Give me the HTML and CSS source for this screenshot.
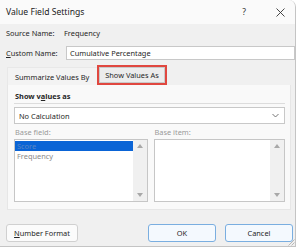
FILE: index.html
```html
<!DOCTYPE html>
<html>
<head>
<meta charset="utf-8">
<link rel="stylesheet" href="styles.css">
</head>
<body>
<div class="dialog">
  <div class="titlebar">
    <span class="title">Value Field Settings</span>
    <span class="help">?</span>
    <svg class="close" width="9" height="9" viewBox="0 0 9 9"><path d="M0.5 0.5L8.5 8.5M8.5 0.5L0.5 8.5" stroke="#333" stroke-width="0.9" fill="none"/></svg>
  </div>
  <div class="body">
    <div class="row source">
      <span class="label">Source Name:</span>
      <span class="value">Frequency</span>
    </div>
    <div class="row custom">
      <span class="label"><u>C</u>ustom Name:</span>
      <div class="input">Cumulative Percentage</div>
    </div>
    <div class="tabs">
      <div class="tab">Summarize Values By</div>
      <div class="tab-hl"><div class="tab active">Show Values As</div></div>
    </div>
    <div class="panel">
      <div class="heading">Show v<u>a</u>lues as</div>
      <div class="select">
        <span>No Calculation</span>
        <svg class="chev" width="7" height="5" viewBox="0 0 7 5"><path d="M0.5 1L3.5 4L6.5 1" stroke="#666" stroke-width="0.9" fill="none"/></svg>
      </div>
      <div class="lists">
        <div class="col">
          <div class="sublabel">Base field:</div>
          <div class="listbox">
            <div class="items">
              <div class="item sel">Score</div>
              <div class="item">Frequency</div>
            </div>
            <div class="scroll"><span class="up"></span><span class="down"></span></div>
          </div>
        </div>
        <div class="col">
          <div class="sublabel">Base item:</div>
          <div class="listbox">
            <div class="items"></div>
            <div class="scroll"><span class="up"></span><span class="down"></span></div>
          </div>
        </div>
      </div>
    </div>
    <div class="buttons">
      <div class="btn numfmt"><u>N</u>umber Format</div>
      <div class="spacer"></div>
      <div class="btn blue ok">OK</div>
      <div class="btn blue cancel">Cancel</div>
    </div>
  </div>
  <svg class="grip" width="8" height="8" viewBox="0 0 8 8"><path d="M7.5 1.5L1.5 7.5M7.5 4.5L4.5 7.5" stroke="#aaa" stroke-width="0.8" fill="none"/></svg>
</div>
</body>
</html>
```
FILE: styles.css
```css
* { box-sizing: border-box; }
html, body { margin: 0; padding: 0; }
body {
  width: 300px;
  height: 249px;
  background: #ffffff;
  font-family: "Noto Sans", "Open Sans", sans-serif;
  font-size: 7.4px;
  color: #262626;
  overflow: hidden;
}
u { text-decoration: underline; text-underline-offset: 1px; }
.dialog {
  position: relative;
  width: 296px;
  height: 247px;
  background: #f0f0f0;
  border-right: 1px solid #c4c4c4;
  border-bottom: 1px solid #c4c4c4;
  border-top-right-radius: 7px;
  display: flex;
  flex-direction: column;
  overflow: hidden;
}
.titlebar {
  height: 24px;
  background: #fafafa;
  display: flex;
  align-items: center;
  padding-left: 6px;
  flex-shrink: 0;
}
.title { flex: 1; font-size: 8.6px; color: #1a1a1a; }
.help { font-size: 8.6px; color: #333; margin-right: 30px; }
.close { margin-right: 10px; }
.body {
  flex: 1;
  padding: 0 0 0 6px;
  display: flex;
  flex-direction: column;
}
.row { display: flex; align-items: center; white-space: nowrap; }
.source { height: 12px; margin-top: 3px; }
.source .label { width: 58px; }
.custom { margin-top: 7px; height: 14px; }
.custom .label { width: 60px; }
.input {
  width: 229px;
  height: 14px;
  background: #fff;
  border: 1px solid #c8c8c8;
  padding-left: 3px;
  line-height: 12px;
}
.tabs {
  display: flex;
  align-items: flex-end;
  margin-top: 5px;
  height: 20px;
  margin-left: 1px;
  width: 284px;
  white-space: nowrap;
}
.tab {
  height: 18px;
  line-height: 18px;
  white-space: nowrap;
}
.tabs > .tab {
  height: 18px;
  width: 90px;
  padding-left: 7px;
  background: #f3f3f3;
  border-top: 1px solid #e8e8e8;
  border-left: 1px solid #e8e8e8;
}
.tab-hl {
  border: 2px solid #e0473f;
  height: 20px;
  width: 70px;
  padding: 0;
}
.tab-hl .tab {
  height: 16px;
  line-height: 15px;
  background: #ececec;
  border: 1px solid #c9c9c9;
  text-align: center;
}
.panel {
  margin-left: 1px;
  width: 284px;
  height: 125px;
  background: #f9f9f9;
  border: 1px solid #e6e6e6;
  border-top: none;
  padding: 0 5px 0 6px;
  display: flex;
  flex-direction: column;
}
.heading {
  font-weight: bold;
  height: 19px;
  line-height: 16px;
  padding-top: 3px;
  border-bottom: 1px solid #dcdcdc;
  padding-left: 1px;
}
.select {
  margin-top: 3px;
  height: 17px;
  background: #fff;
  border: 1px solid #c8c8c8;
  display: flex;
  align-items: center;
  padding-left: 4px;
  justify-content: space-between;
  padding-right: 5px;
}
.lists { display: flex; gap: 6px; margin-top: 2px; }
.col { display: flex; flex-direction: column; }
.col:first-child { width: 134px; }
.col:last-child { width: 132px; }
.sublabel { color: #9a9a9a; height: 13px; line-height: 13px; padding-left: 1px; }
.listbox {
  height: 63px;
  border: 1px solid #c6c6c6;
  background: #fff;
  display: flex;
}
.items { flex: 1; padding-top: 1px; }
.item { height: 10px; line-height: 10px; padding-left: 2px; color: #8a8a8a; }
.item.sel { background: #0a64d6; color: #5b86c4; }
.scroll {
  width: 14px;
  background: #f0f0f0;
  position: relative;
}
.up, .down {
  position: absolute;
  left: 4px;
  width: 0; height: 0;
  border-left: 3px solid transparent;
  border-right: 3px solid transparent;
}
.up { top: 4px; border-bottom: 4px solid #a8a8a8; }
.down { bottom: 4px; border-top: 4px solid #a8a8a8; }
.buttons {
  display: flex;
  margin-top: 14px;
  height: 18px;
  padding-right: 2px;
}
.spacer { flex: 1; }
.btn {
  height: 18px;
  line-height: 16px;
  text-align: center;
  border: 1px solid #d0d0d0;
  background: #fbfbfb;
  border-radius: 3px;
}
.numfmt { width: 72px; }
.blue {
  border: 1px solid #7aaee0;
  background: #f4f9fe;
  width: 68px;
}
.cancel { margin-left: 9px; }
.grip { position: absolute; right: 0; bottom: 0; }
```
